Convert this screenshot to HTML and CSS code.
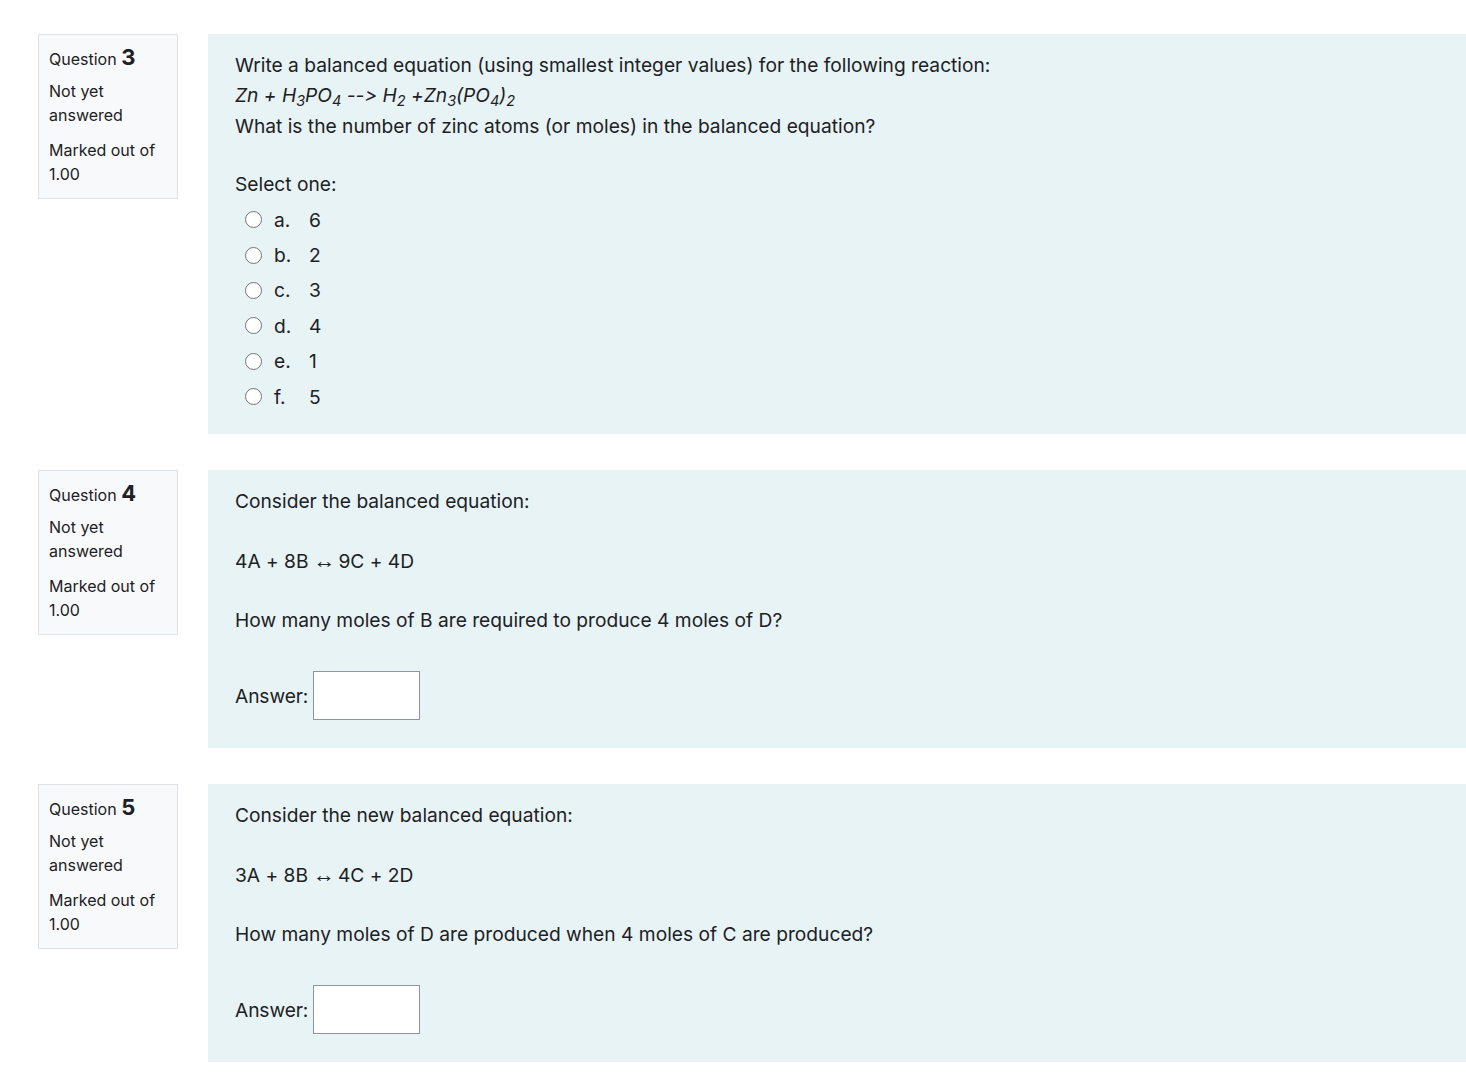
FILE: index.html
```html
<!DOCTYPE html>
<html lang="en">
<head>
<meta charset="utf-8">
<title>Quiz</title>
<link rel="stylesheet" href="styles.css">
</head>
<body>
<div class="page">
  <div class="que">
    <div class="info">
      <div class="qno">Question <span class="num">3</span></div>
      <div class="state">Not yet answered</div>
      <div class="grade">Marked out of 1.00</div>
    </div>
    <div class="content q3">
      <div class="qtext">
        <div class="line">Write a balanced equation (using smallest integer values) for the following reaction:</div>
        <div class="line eq"><i>Zn + H<sub>3</sub>PO<sub>4</sub> --&gt; H<sub>2</sub> +Zn<sub>3</sub>(PO<sub>4</sub>)<sub>2</sub></i></div>
        <div class="line">What is the number of zinc atoms (or moles) in the balanced equation?</div>
      </div>
      <div class="prompt">Select one:</div>
      <div class="answers">
        <label class="opt"><span class="radio"></span><span class="letter">a.</span><span class="val">6</span></label>
        <label class="opt"><span class="radio"></span><span class="letter">b.</span><span class="val">2</span></label>
        <label class="opt"><span class="radio"></span><span class="letter">c.</span><span class="val">3</span></label>
        <label class="opt"><span class="radio"></span><span class="letter">d.</span><span class="val">4</span></label>
        <label class="opt"><span class="radio"></span><span class="letter">e.</span><span class="val">1</span></label>
        <label class="opt"><span class="radio"></span><span class="letter">f.</span><span class="val">5</span></label>
      </div>
    </div>
  </div>

  <div class="que">
    <div class="info">
      <div class="qno">Question <span class="num">4</span></div>
      <div class="state">Not yet answered</div>
      <div class="grade">Marked out of 1.00</div>
    </div>
    <div class="content">
      <p class="para first">Consider the balanced equation:</p>
      <p class="para">4A + 8B <span class="arrow">↔</span> 9C + 4D</p>
      <p class="para">How many moles of B are required to produce 4 moles of D?</p>
      <div class="ablock"><span class="alabel">Answer:</span><span class="input"></span></div>
    </div>
  </div>

  <div class="que">
    <div class="info">
      <div class="qno">Question <span class="num">5</span></div>
      <div class="state">Not yet answered</div>
      <div class="grade">Marked out of 1.00</div>
    </div>
    <div class="content">
      <p class="para first">Consider the new balanced equation:</p>
      <p class="para">3A + 8B <span class="arrow">↔</span> 4C + 2D</p>
      <p class="para">How many moles of D are produced when 4 moles of C are produced?</p>
      <div class="ablock"><span class="alabel">Answer:</span><span class="input"></span></div>
    </div>
  </div>
</div>
</body>
</html>
```
FILE: styles.css
```css
html, body {
  margin: 0;
  padding: 0;
  background: #ffffff;
}
body {
  font-family: Inter, "Liberation Sans", sans-serif;
  color: #1d2125;
  font-variant-ligatures: none;
  font-feature-settings: "calt" 0, "liga" 0;
}
.page {
  padding: 34px 0 0 38px;
  display: flex;
  flex-direction: column;
  gap: 36px;
}
.que {
  display: flex;
  align-items: flex-start;
  gap: 30px;
}
.info {
  width: 140px;
  box-sizing: border-box;
  background: #f8f9fa;
  border: 1px solid #dee2e6;
  padding: 10px 10px 12px;
  font-size: 16px;
  line-height: 24px;
  flex: none;
}
.qno {
  font-size: 16px;
  margin-bottom: 8px;
}
.num {
  font-size: 22px;
  font-weight: 700;
}
.state {
  margin-bottom: 11px;
}
.content {
  flex: 1;
  background: #e7f3f5;
  padding: 16px 27px 28px;
  font-size: 19.2px;
  line-height: 30px;
}
.q3 {
  padding-top: 16px;
  padding-bottom: 20px;
}
.eq {
  line-height: 31px;
}
.eq sub {
  font-size: 0.75em;
  line-height: 0;
  vertical-align: -0.25em;
}
.prompt {
  margin-top: 28px;
  margin-bottom: 3px;
}
.answers {
  display: flex;
  flex-direction: column;
}
.opt {
  display: flex;
  align-items: center;
  height: 35.4px;
}
.radio {
  width: 17px;
  height: 17px;
  box-sizing: border-box;
  border: 1px solid #6f757c;
  border-radius: 50%;
  background: #fff;
  margin-left: 10px;
  margin-right: 12px;
}
.letter {
  width: 35px;
}
.para {
  margin: 0 0 29px;
  height: 30px;
}
.para.first {
  margin-bottom: 30px;
}
.arrow {
  font-family: "Liberation Sans", sans-serif;
  font-size: 1.15em;
  line-height: 0;
  margin: 0 -2px 0 -1px;
}
.ablock {
  display: flex;
  align-items: center;
  margin-top: 36px;
  gap: 5px;
}
.alabel {
  letter-spacing: -0.1px;
}
.input {
  width: 107px;
  height: 49px;
  box-sizing: border-box;
  background: #fff;
  border: 1px solid #8f959e;
}
```
